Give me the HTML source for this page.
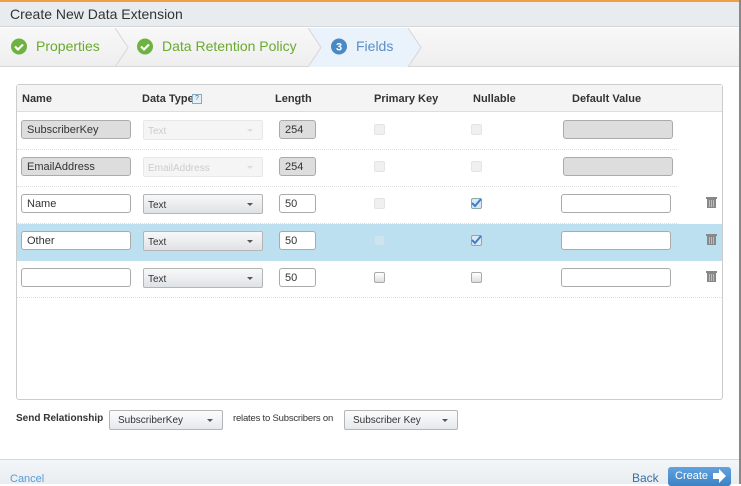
<!DOCTYPE html><html><head><style>
*{box-sizing:border-box;margin:0;padding:0}
body{width:741px;height:484px;position:relative;overflow:hidden;background:#fff;font-family:"Liberation Sans",sans-serif;font-size:11px;color:#333}
.a{position:absolute}
.inp{position:absolute;height:19px;border:1px solid #aaa;border-radius:3px;background:#fff;padding:3px 5px;font-size:11px;color:#333}
.dis{background:#ddd;border-color:#aaa}
.sel{position:absolute;height:20px;border:1px solid #b5b5b5;border-radius:2px;background:linear-gradient(#f7f8f9,#dfe2e5);padding:5px 4px;font-size:10px;color:#333}
.sel:after{content:"";position:absolute;right:9px;top:8px;border:3px solid transparent;border-top:3px solid #555}
.seld{background:#f5f5f5;border-color:#e8e8e8;color:#ccc}
.seld:after{border-top-color:#ddd}
.cb{position:absolute;width:11px;height:11px;border:1px solid #aaa;border-radius:2px;background:linear-gradient(#fff,#ddd)}
.cbd{border-color:#e4e4e4;background:#f0f0f0}
.th{position:absolute;top:93px;font-weight:bold;font-size:11px;color:#333}
.sep{position:absolute;left:17px;width:660px;border-top:1px dotted #ddd}
</style></head><body>
<div class="a" style="left:0;top:0;width:741px;height:2px;background:#f0a040"></div>
<div class="a" style="left:0;top:2px;width:741px;height:25px;background:#e8ecee;border-bottom:1px solid #d5d9dc"></div>
<div class="a" style="left:10px;top:6px;font-size:14px;color:#333">Create New Data Extension</div>
<div class="a" style="left:0;top:28px;width:741px;height:39px;background:linear-gradient(#f8f8f8,#eeeeee);border-bottom:1px solid #d8d8d8"></div>
<svg class="a" style="left:0;top:28px" width="741" height="39">
<polygon points="308,0 408,0 421,19.5 408,39 308,39 321,19.5" fill="#eaf2fb"/>
<polyline points="115,0 128,19.5 115,39" fill="none" stroke="#d6d6d6"/>
<polyline points="308,0 321,19.5 308,39" fill="none" stroke="#d6d6d6"/>
<polyline points="408,0 421,19.5 408,39" fill="none" stroke="#d6d6d6"/>
<circle cx="19" cy="18.5" r="8" fill="#6db33f"/><path d="M15 18.5l3 3 5-5" stroke="#fff" stroke-width="2.2" fill="none"/>
<circle cx="145" cy="18.5" r="8" fill="#6db33f"/><path d="M141 18.5l3 3 5-5" stroke="#fff" stroke-width="2.2" fill="none"/>
<circle cx="339" cy="18.5" r="8" fill="#4a8ac4"/><text x="339" y="22.5" text-anchor="middle" fill="#fff" font-size="11" font-weight="bold" font-family="Liberation Sans">3</text>
</svg>
<div class="a" style="left:36px;top:38px;font-size:14px;color:#6aaa30">Properties</div>
<div class="a" style="left:162px;top:38px;font-size:14px;color:#6aaa30">Data Retention Policy</div>
<div class="a" style="left:356px;top:38px;font-size:14px;color:#5b8fc4">Fields</div>
<div class="a" style="left:739px;top:0;width:2px;height:484px;background:#888"></div>

<div class="a" style="left:16px;top:84px;width:707px;height:316px;border:1px solid #ccc;border-radius:3px"></div>
<div class="a" style="left:17px;top:85px;width:705px;height:27px;background:#f4f4f4;border-bottom:1px solid #ddd"></div>
<div class="th" style="left:22px">Name</div>
<div class="th" style="left:142px">Data Type</div>
<div class="a" style="left:192px;top:94px;width:10px;height:10px;border:1px solid #8ab;background:#e6f0f8;font-size:7px;color:#468;text-align:center;line-height:8px">?</div>
<div class="th" style="left:275px">Length</div>
<div class="th" style="left:374px">Primary Key</div>
<div class="th" style="left:473px">Nullable</div>
<div class="th" style="left:572px">Default Value</div>

<div class="a" style="left:17px;top:224px;width:705px;height:37px;background:#bde0f0"></div>
<div class="sep" style="top:149px"></div><div class="sep" style="top:186px"></div><div class="sep" style="top:223px"></div><div class="sep" style="top:297px;width:705px"></div>

<div class="inp dis" style="left:21px;top:120px;width:110px">SubscriberKey</div>
<div class="sel seld" style="left:143px;top:120px;width:120px">Text</div>
<div class="inp dis" style="left:279px;top:120px;width:37px">254</div>
<div class="cb cbd" style="left:374px;top:124px"></div><div class="cb cbd" style="left:471px;top:124px"></div>
<div class="inp dis" style="left:563px;top:120px;width:110px"></div>

<div class="inp dis" style="left:21px;top:157px;width:110px">EmailAddress</div>
<div class="sel seld" style="left:143px;top:157px;width:120px">EmailAddress</div>
<div class="inp dis" style="left:279px;top:157px;width:37px">254</div>
<div class="cb cbd" style="left:374px;top:161px"></div><div class="cb cbd" style="left:471px;top:161px"></div>
<div class="inp dis" style="left:563px;top:157px;width:110px"></div>

<div class="inp" style="left:21px;top:194px;width:110px">Name</div>
<div class="sel" style="left:143px;top:194px;width:120px">Text</div>
<div class="inp" style="left:279px;top:194px;width:37px">50</div>
<div class="cb cbd" style="left:374px;top:198px"></div>
<div class="cb" style="left:471px;top:198px;background:#dde8f3;border-color:#8aa"></div>
<div class="inp" style="left:561px;top:194px;width:110px"></div>

<div class="inp" style="left:21px;top:231px;width:110px">Other</div>
<div class="sel" style="left:143px;top:231px;width:120px">Text</div>
<div class="inp" style="left:279px;top:231px;width:37px">50</div>
<div class="cb cbd" style="left:374px;top:235px;background:#cce4f0;border-color:#c8dce6"></div>
<div class="cb" style="left:471px;top:235px;background:#dde8f3;border-color:#8aa"></div>
<div class="inp" style="left:561px;top:231px;width:110px"></div>

<div class="inp" style="left:21px;top:268px;width:110px"></div>
<div class="sel" style="left:143px;top:268px;width:120px">Text</div>
<div class="inp" style="left:279px;top:268px;width:37px">50</div>
<div class="cb" style="left:374px;top:272px"></div><div class="cb" style="left:471px;top:272px"></div>
<div class="inp" style="left:561px;top:268px;width:110px"></div>

<svg class="a" style="left:0;top:0" width="741" height="484">
<g fill="none" stroke="#3a7fc8" stroke-width="2"><path d="M472 203l3 3 6-7"/><path d="M472 240l3 3 6-7"/></g>
<g fill="#888"><rect x="706" y="197" width="11" height="2"/><rect x="707" y="199" width="9" height="9"/>
<rect x="706" y="234" width="11" height="2"/><rect x="707" y="236" width="9" height="9"/>
<rect x="706" y="271" width="11" height="2"/><rect x="707" y="273" width="9" height="9"/></g>
<g stroke="#bbb" stroke-width="1"><path d="M709.5 200v7M711.5 200v7M713.5 200v7M709.5 237v7M711.5 237v7M713.5 237v7M709.5 274v7M711.5 274v7M713.5 274v7"/></g>
</svg>

<div class="a" style="left:16px;top:413px;font-weight:bold;font-size:10px">Send Relationship</div>
<div class="sel" style="left:109px;top:410px;width:114px;background:linear-gradient(#fbfcfd,#e6e9ec);padding:4px 8px">SubscriberKey</div>
<div class="a" style="left:233px;top:413px;font-size:9.5px;letter-spacing:-0.2px">relates to Subscribers on</div>
<div class="sel" style="left:344px;top:410px;width:114px;background:linear-gradient(#fbfcfd,#e6e9ec);padding:4px 8px">Subscriber Key</div>

<div class="a" style="left:0;top:459px;width:739px;height:25px;background:linear-gradient(#f3f6f8,#e8edf1);border-top:1px solid #d5d8db"></div>
<div class="a" style="left:10px;top:473px;font-size:11px;color:#5b9bd5">Cancel</div>
<div class="a" style="left:632px;top:471px;font-size:12px;color:#3a6ea5">Back</div>
<div class="a" style="left:668px;top:467px;width:63px;height:19px;border-radius:3px;background:linear-gradient(#62a3de,#3c82c4);color:#fff;font-size:11px;padding:3px 7px">Create</div>
<svg class="a" style="left:712px;top:469px" width="14" height="14"><path d="M1 4h6v-4l7 7-7 7v-4h-6z" fill="#fff"/></svg>
</body></html>
